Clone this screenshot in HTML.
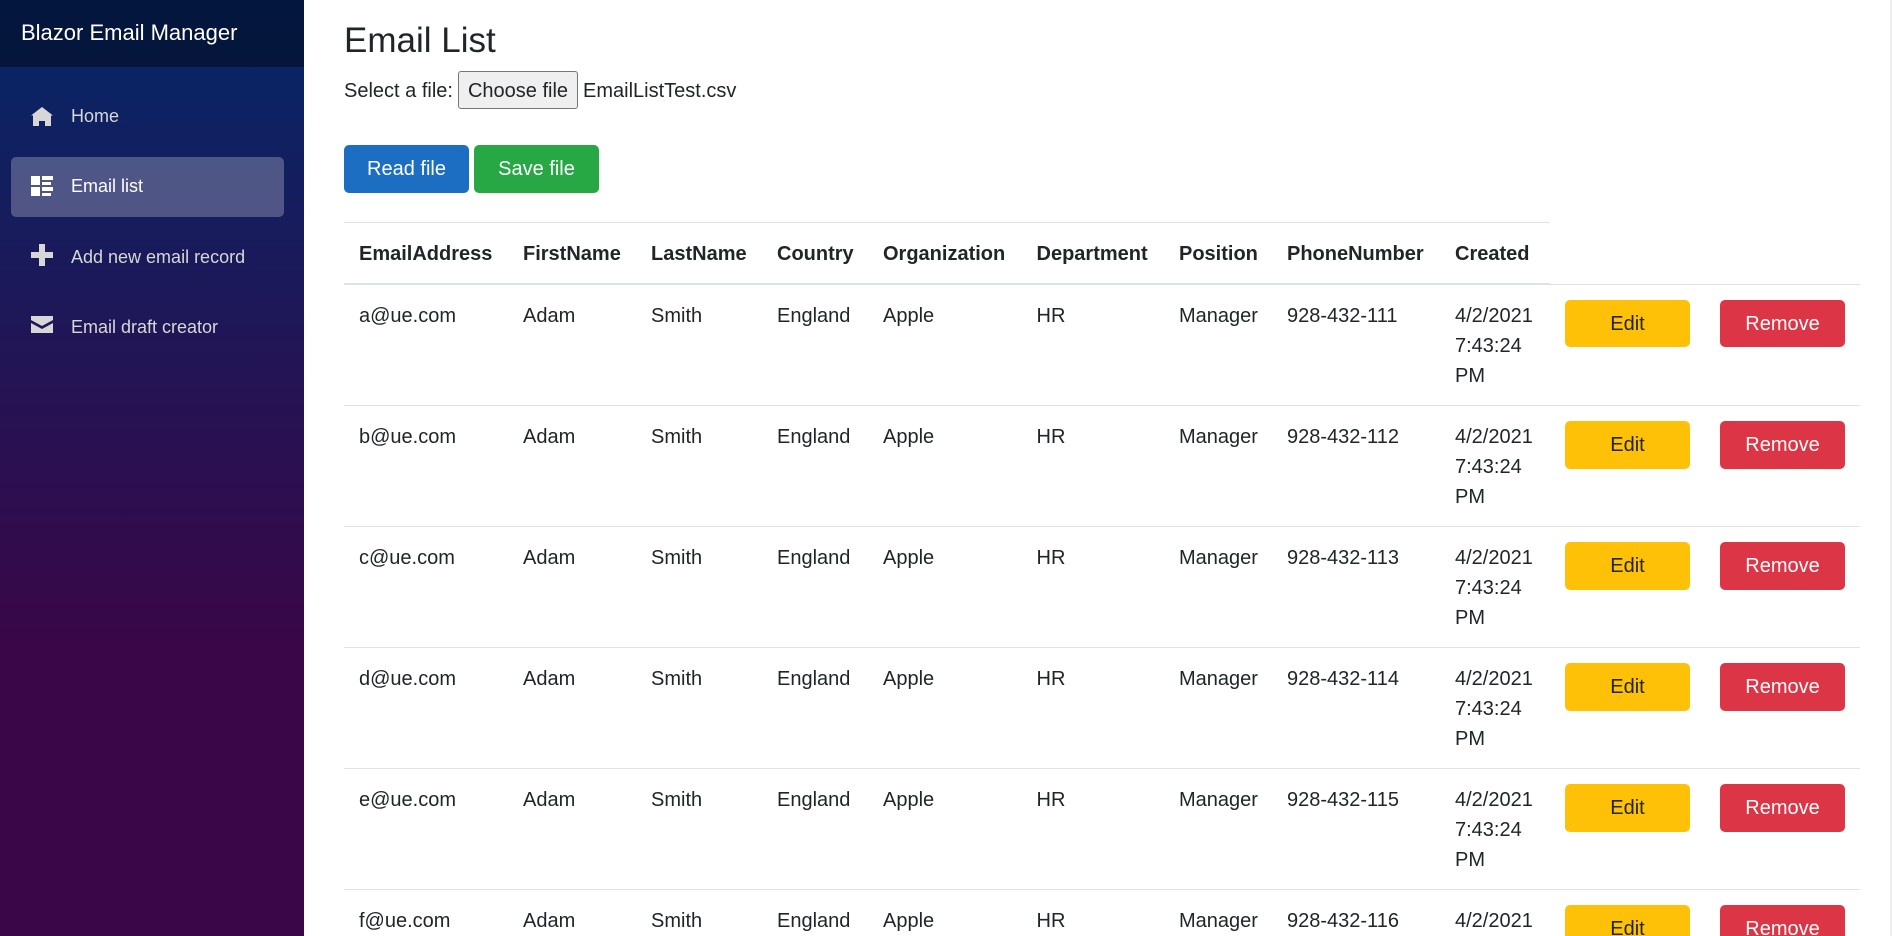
<!DOCTYPE html>
<html lang="en">
<head>
<meta charset="utf-8">
<title>Blazor Email Manager</title>
<style>
html,body{margin:0;padding:0;width:1892px;height:936px;overflow:hidden;background:#fff}
body{font-family:"Liberation Sans",Arial,sans-serif;font-size:20px;line-height:30px;color:#212529;position:relative}
#side{position:absolute;left:0;top:0;width:304px;height:936px;background:linear-gradient(180deg,#052767 0%,#3a0647 70%)}
#top{position:absolute;left:0;top:0;width:304px;height:67px;background:rgba(0,0,0,.4);color:#fff;font-size:22px;line-height:65px;text-indent:21px}
.nav{position:absolute;left:11px;width:273px;height:60px;border-radius:5px;color:#d7d7d7;font-size:18px;line-height:60px}
.nav.on{background:rgba(255,255,255,.25);color:#fff}
.nav span{position:absolute;left:60px;top:0;white-space:nowrap}
#ic{position:absolute;left:0;top:0;width:304px;height:400px}
h3{position:absolute;left:344px;top:20px;margin:0;font-size:35px;line-height:42px;font-weight:400}
.abs{position:absolute;white-space:nowrap}
.fb{position:absolute;left:458px;top:71px;width:120px;height:38px;box-sizing:border-box;background:#efefef;border:1px solid #767676;border-radius:3px;text-align:center;line-height:38px}
.b{display:block;box-sizing:border-box;width:125px;height:47.5px;border-radius:5px;text-align:center;line-height:49px}
.blue{background:#1b6ec2;color:#fff}.green{background:#28a745;color:#fff}.yel{background:#ffc107;color:#212529}.red{background:#dc3545;color:#fff}
table{position:absolute;left:344px;top:222px;width:1516px;table-layout:fixed;border-collapse:collapse}
th,td{padding:16px 15px 14px;text-align:left;vertical-align:top;border-top:1px solid #dee2e6}
td.a{padding:15px}
th{font-weight:700;border-bottom:2px solid #dee2e6;white-space:nowrap}
th.n{border:0}
td{height:90px}
#bar{position:absolute;left:1890px;top:0;width:2px;height:936px;background:#eee}
</style>
</head>
<body>
<div id="side">
  <div id="top">Blazor Email Manager</div>
  <div class="nav" style="top:86px"><span>Home</span></div>
  <div class="nav on" style="top:157px"><span style="top:-1px">Email list</span></div>
  <div class="nav" style="top:227px"><span>Add new email record</span></div>
  <div class="nav" style="top:297px"><span>Email draft creator</span></div>
  <svg id="ic" viewBox="0 0 304 400">
    <path fill="#d7d7d7" d="M42 107L31 115.500H33V126H39V121H45V126H51V115.500H53Z"/>
    <path fill="#fff" d="M31 176H40V185H31ZM31 187H40V196H31ZM42 176H53V180H42ZM42 182H51V185H42ZM42 187H53V191H42ZM42 193H51V196H42Z"/>
    <path fill="#d7d7d7" d="M39 244H45V252H53V258H45V266H39V258H31V252H39Z"/>
    <path fill="#d7d7d7" d="M31 316H53V320L42 326L31 320ZM31 323L42 329L53 323V333H31Z"/>
  </svg>
</div>
<h3>Email List</h3>
<div class="abs" style="left:344px;top:76px">Select a file:</div>
<div class="fb">Choose file</div>
<div class="abs" style="left:583px;top:76px">EmailListTest.csv</div>
<div class="abs b blue" style="left:344px;top:145px">Read file</div>
<div class="abs b green" style="left:474px;top:145px">Save file</div>
<table>
<colgroup>
<col style="width:164px"><col style="width:128px"><col style="width:126px"><col style="width:106px"><col style="width:153.5px"><col style="width:142.5px"><col style="width:108px"><col style="width:168px"><col style="width:110px"><col style="width:155px"><col style="width:155px">
</colgroup>
<thead><tr><th>EmailAddress</th><th>FirstName</th><th>LastName</th><th>Country</th><th>Organization</th><th>Department</th><th>Position</th><th>PhoneNumber</th><th>Created</th><th class="n"></th><th class="n"></th></tr></thead>
<tbody>
<tr><td>a@ue.com</td><td>Adam</td><td>Smith</td><td>England</td><td>Apple</td><td>HR</td><td>Manager</td><td>928-432-111</td><td>4/2/2021 7:43:24 PM</td><td class="a"><a class="b yel">Edit</a></td><td class="a"><a class="b red">Remove</a></td></tr>
<tr><td>b@ue.com</td><td>Adam</td><td>Smith</td><td>England</td><td>Apple</td><td>HR</td><td>Manager</td><td>928-432-112</td><td>4/2/2021 7:43:24 PM</td><td class="a"><a class="b yel">Edit</a></td><td class="a"><a class="b red">Remove</a></td></tr>
<tr><td>c@ue.com</td><td>Adam</td><td>Smith</td><td>England</td><td>Apple</td><td>HR</td><td>Manager</td><td>928-432-113</td><td>4/2/2021 7:43:24 PM</td><td class="a"><a class="b yel">Edit</a></td><td class="a"><a class="b red">Remove</a></td></tr>
<tr><td>d@ue.com</td><td>Adam</td><td>Smith</td><td>England</td><td>Apple</td><td>HR</td><td>Manager</td><td>928-432-114</td><td>4/2/2021 7:43:24 PM</td><td class="a"><a class="b yel">Edit</a></td><td class="a"><a class="b red">Remove</a></td></tr>
<tr><td>e@ue.com</td><td>Adam</td><td>Smith</td><td>England</td><td>Apple</td><td>HR</td><td>Manager</td><td>928-432-115</td><td>4/2/2021 7:43:24 PM</td><td class="a"><a class="b yel">Edit</a></td><td class="a"><a class="b red">Remove</a></td></tr>
<tr><td>f@ue.com</td><td>Adam</td><td>Smith</td><td>England</td><td>Apple</td><td>HR</td><td>Manager</td><td>928-432-116</td><td>4/2/2021 7:43:24 PM</td><td class="a"><a class="b yel">Edit</a></td><td class="a"><a class="b red">Remove</a></td></tr>
</tbody>
</table>
<div id="bar"></div>
</body>
</html>
